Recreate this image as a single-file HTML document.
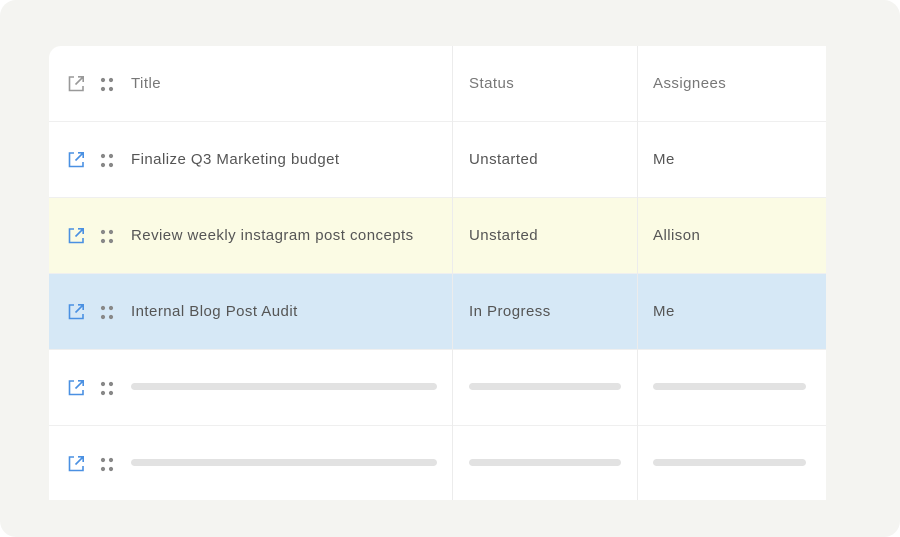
<!DOCTYPE html>
<html><head><style>
html,body{margin:0;padding:0;background:#fff;}
.bg{position:absolute;left:0;top:0;width:900px;height:537px;background:#f4f4f1;border-radius:16px;overflow:hidden;font-family:"Liberation Sans",sans-serif;}
.tbl{position:absolute;left:49px;top:46px;width:777px;height:454px;background:#fff;border-radius:12px 0 0 0;overflow:hidden;}
.row{position:absolute;left:0;width:777px;height:76px;border-bottom:1px solid #efefef;box-sizing:border-box;}
.vl{position:absolute;top:0;width:1px;height:454px;background:#ececec;}
.t{position:absolute;top:0;line-height:76px;font-size:15px;color:#555;letter-spacing:0.45px;}
.h{color:#777;}
</style></head><body>
<div class="bg">
<div class="tbl">
<div class="row" style="top:0"></div>
<div class="row" style="top:76px"></div>
<div class="row" style="top:152px;background:#fbfbe4"></div>
<div class="row" style="top:228px;background:#d6e8f6"></div>
<div class="row" style="top:304px"></div>
<div class="row" style="top:380px;border:none"></div>
<div class="vl" style="left:403px"></div>
<div class="vl" style="left:588px"></div>
</div>
<svg width="900" height="537" style="position:absolute;left:0;top:0">
<defs>
<g id="ext"><path d="M7 2H2.5V15.5H16V11" fill="none" stroke-width="1.6"/><path d="M8.5 9.5L16 2M11 1.8H16.2V7" fill="none" stroke-width="1.6"/></g>
<g id="dt" fill="#888"><circle cx="2" cy="2" r="2.1"/><circle cx="10" cy="2" r="2.1"/><circle cx="2" cy="11" r="2.1"/><circle cx="10" cy="11" r="2.1"/></g>
</defs>
<use href="#ext" x="67" y="75" stroke="#999"/>
<use href="#ext" x="67" y="151" stroke="#4a90e2"/>
<use href="#ext" x="67" y="227" stroke="#4a90e2"/>
<use href="#ext" x="67" y="303" stroke="#4a90e2"/>
<use href="#ext" x="67" y="379" stroke="#4a90e2"/>
<use href="#ext" x="67" y="455" stroke="#4a90e2"/>
<use href="#dt" x="101" y="78"/>
<use href="#dt" x="101" y="154"/>
<use href="#dt" x="101" y="230"/>
<use href="#dt" x="101" y="306"/>
<use href="#dt" x="101" y="382"/>
<use href="#dt" x="101" y="458"/>
<g fill="#e2e2e2">
<rect x="131" y="383" width="306" height="7" rx="3.5"/><rect x="469" y="383" width="152" height="7" rx="3.5"/><rect x="653" y="383" width="153" height="7" rx="3.5"/>
<rect x="131" y="459" width="306" height="7" rx="3.5"/><rect x="469" y="459" width="152" height="7" rx="3.5"/><rect x="653" y="459" width="153" height="7" rx="3.5"/>
</g>
</svg>
<div style="position:absolute;left:0;top:46px;width:900px">
<div class="t h" style="left:131px">Title</div><div class="t h" style="left:469px">Status</div><div class="t h" style="left:653px">Assignees</div>
</div>
<div style="position:absolute;left:0;top:122px;width:900px">
<div class="t" style="left:131px">Finalize Q3 Marketing budget</div><div class="t" style="left:469px">Unstarted</div><div class="t" style="left:653px">Me</div>
</div>
<div style="position:absolute;left:0;top:198px;width:900px">
<div class="t" style="left:131px">Review weekly instagram post concepts</div><div class="t" style="left:469px">Unstarted</div><div class="t" style="left:653px">Allison</div>
</div>
<div style="position:absolute;left:0;top:274px;width:900px">
<div class="t" style="left:131px">Internal Blog Post Audit</div><div class="t" style="left:469px">In Progress</div><div class="t" style="left:653px">Me</div>
</div>
</div>
</body></html>
